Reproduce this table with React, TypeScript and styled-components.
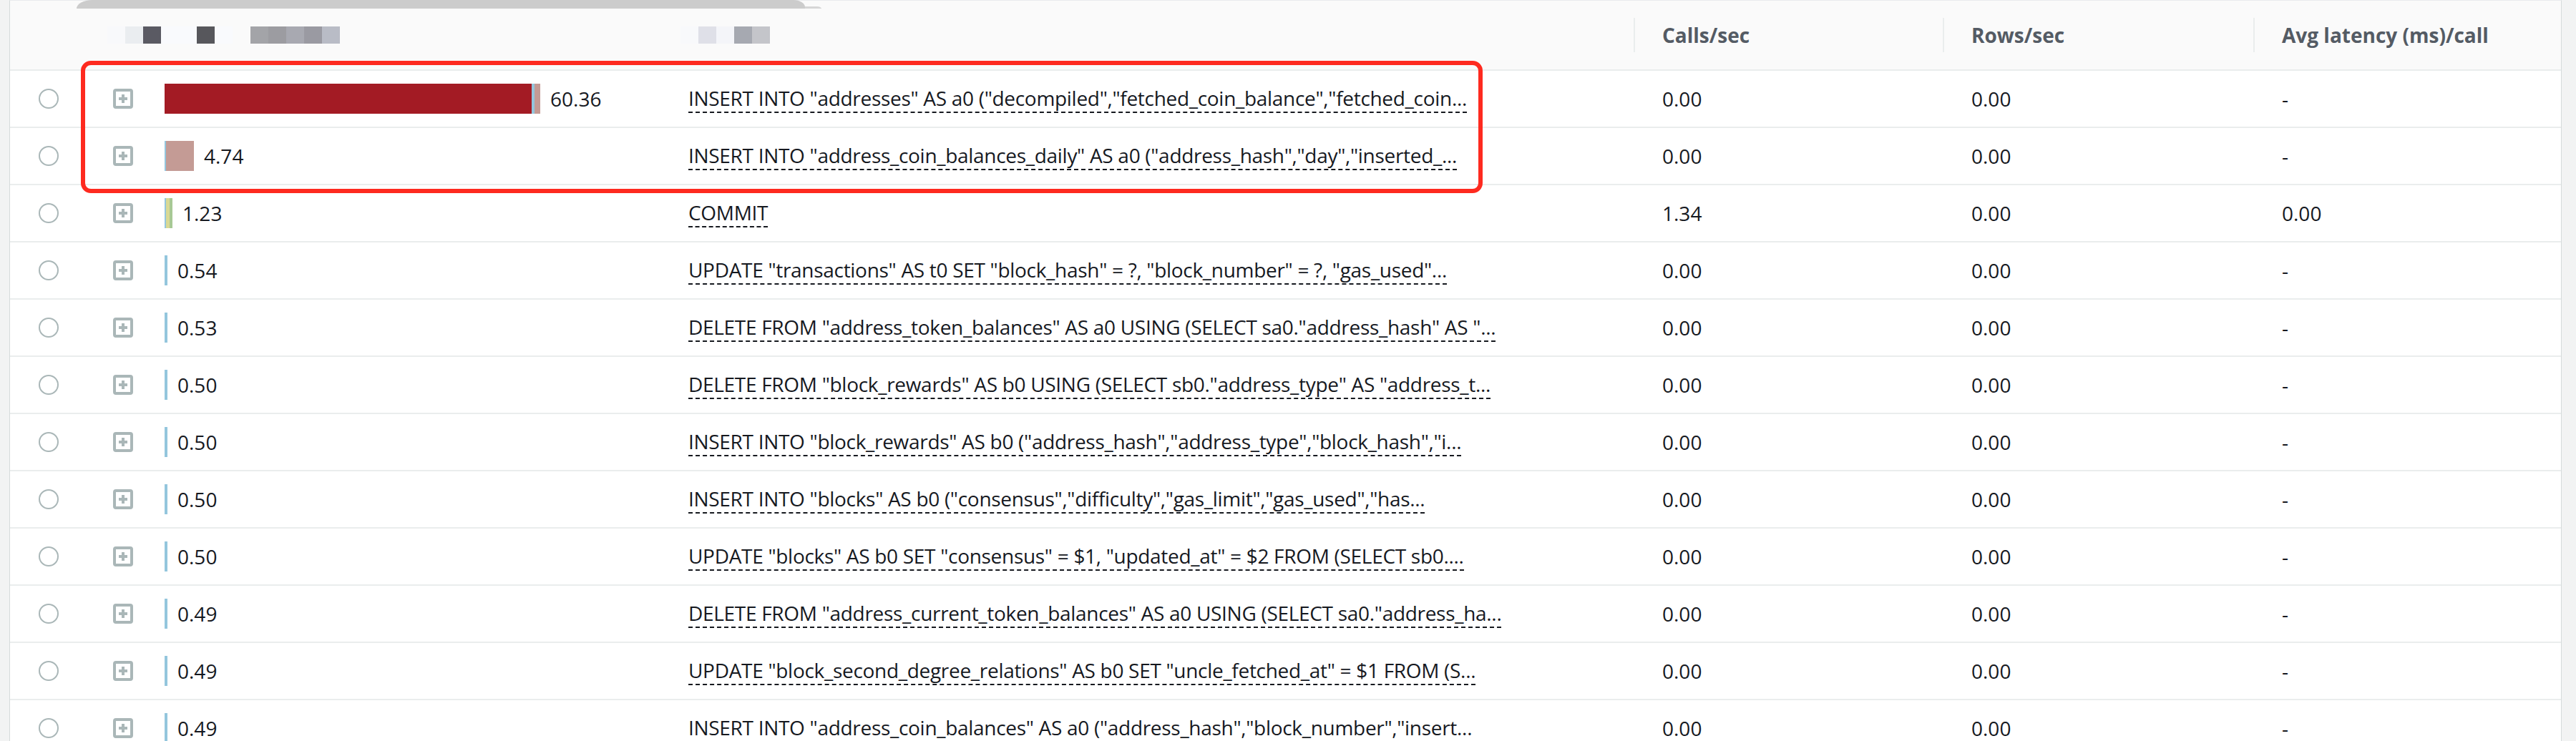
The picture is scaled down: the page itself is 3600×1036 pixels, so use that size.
import React from "react";
import styled, { createGlobalStyle } from "styled-components";

const GlobalStyle = createGlobalStyle`
  html, body {
    margin: 0;
    padding: 0;
    overflow: hidden;
    background: #f2f3f3;
  }
  body {
    font-family: "Open Sans", "Liberation Sans", Arial, sans-serif;
    color: #16191f;
  }
  * { box-sizing: border-box; }
`;

const GRID = "144px 72px 692px 1361px 432px 434px 1fr";

const Page = styled.div`
  padding: 0 20px 0 13px;
  min-height: 1036px;
`;

const TableFrame = styled.div`
  position: relative;
  background: #ffffff;
  border-left: 1px solid #d5dbdb;
  border-right: 1px solid #d5dbdb;
  border-top: 1px solid #e9ebed;
`;

const TopShade = styled.div`
  position: absolute;
  left: 93px;
  top: -1px;
  width: 1018px;
  height: 12px;
  background: #cccccc;
  border-top-left-radius: 22px 12px;
  border-top-right-radius: 16px 10px;
  &::after {
    content: "";
    position: absolute;
    right: -23px;
    bottom: 0;
    width: 23px;
    height: 3px;
    background: #d6d6d6;
    border-top-right-radius: 6px 3px;
  }
`;

const HeaderRow = styled.div`
  display: grid;
  grid-template-columns: ${GRID};
  height: 98px;
  background: #fafafa;
  border-bottom: 2px solid #eaeded;
`;

const HeaderCell = styled.div<{ $pad?: number; $span?: string; $divider?: boolean }>`
  position: relative;
  display: flex;
  align-items: center;
  grid-column: ${(p) => p.$span ?? "auto"};
  padding-left: ${(p) => p.$pad ?? 40}px;
  font-size: 28px;
  font-weight: 700;
  color: #545b64;
  white-space: nowrap;
  &::before {
    content: "";
    display: ${(p) => (p.$divider ? "block" : "none")};
    position: absolute;
    left: 0;
    top: 24px;
    width: 2px;
    height: 48px;
    background: #eaeded;
  }
`;

const Mosaic = styled.div`
  display: flex;
  height: 24px;
`;

const MosaicTile = styled.span<{ $color: string }>`
  display: block;
  width: 25px;
  height: 24px;
  background: ${(p) => p.$color};
`;

const Row = styled.div`
  display: grid;
  grid-template-columns: ${GRID};
  height: 80px;
  border-bottom: 2px solid #eaeded;
`;

const Cell = styled.div<{ $pad?: number }>`
  display: flex;
  align-items: center;
  min-width: 0;
  padding-left: ${(p) => p.$pad ?? 40}px;
  font-size: 28px;
  color: #16191f;
  white-space: nowrap;
`;

const Radio = styled.span`
  display: block;
  width: 28px;
  height: 28px;
  border-radius: 50%;
  border: 2px solid #aab7b8;
  background: #ffffff;
`;

const ExpandIcon = styled.svg`
  display: block;
  width: 28px;
  height: 28px;
`;

const BarWrap = styled.div`
  display: flex;
  align-items: center;
  gap: 14px;
`;

const Bar = styled.div`
  display: flex;
  height: 42px;
`;

const BarSegment = styled.span<{ $color: string }>`
  display: block;
  height: 42px;
  background: ${(p) => p.$color};
`;

const Sql = styled.span`
  display: inline-block;
  line-height: 38px;
  letter-spacing: -0.3px;
  border-bottom: 2px dashed #16191f;
`;

const Highlight = styled.div`
  position: absolute;
  left: 99px;
  top: 84px;
  width: 1959px;
  height: 185px;
  border: 6px solid #fe2a1f;
  border-radius: 14px;
  pointer-events: none;
`;

const BLUE = "#94c6dd";
const RED = "#a31b24";
const PINK = "#c49b95";
const YELLOW = "#d9d994";
const GREEN = "#a8c995";

type Seg = { color: string; w: number };
type RowData = {
  load: string;
  segs: Seg[];
  sql: string;
  calls: string;
  rows: string;
  avg: string;
};

const data: RowData[] = [
  {
    load: "60.36",
    segs: [
      { color: RED, w: 513 },
      { color: BLUE, w: 4 },
      { color: PINK, w: 8 },
    ],
    sql: 'INSERT INTO "addresses" AS a0 ("decompiled","fetched_coin_balance","fetched_coin...',
    calls: "0.00",
    rows: "0.00",
    avg: "-",
  },
  {
    load: "4.74",
    segs: [
      { color: BLUE, w: 2 },
      { color: PINK, w: 39 },
    ],
    sql: 'INSERT INTO "address_coin_balances_daily" AS a0 ("address_hash","day","inserted_...',
    calls: "0.00",
    rows: "0.00",
    avg: "-",
  },
  {
    load: "1.23",
    segs: [
      { color: BLUE, w: 2 },
      { color: YELLOW, w: 5 },
      { color: GREEN, w: 4 },
    ],
    sql: "COMMIT",
    calls: "1.34",
    rows: "0.00",
    avg: "0.00",
  },
  {
    load: "0.54",
    segs: [{ color: BLUE, w: 4 }],
    sql: 'UPDATE "transactions" AS t0 SET "block_hash" = ?, "block_number" = ?, "gas_used"...',
    calls: "0.00",
    rows: "0.00",
    avg: "-",
  },
  {
    load: "0.53",
    segs: [{ color: BLUE, w: 4 }],
    sql: 'DELETE FROM "address_token_balances" AS a0 USING (SELECT sa0."address_hash" AS "...',
    calls: "0.00",
    rows: "0.00",
    avg: "-",
  },
  {
    load: "0.50",
    segs: [{ color: BLUE, w: 4 }],
    sql: 'DELETE FROM "block_rewards" AS b0 USING (SELECT sb0."address_type" AS "address_t...',
    calls: "0.00",
    rows: "0.00",
    avg: "-",
  },
  {
    load: "0.50",
    segs: [{ color: BLUE, w: 4 }],
    sql: 'INSERT INTO "block_rewards" AS b0 ("address_hash","address_type","block_hash","i...',
    calls: "0.00",
    rows: "0.00",
    avg: "-",
  },
  {
    load: "0.50",
    segs: [{ color: BLUE, w: 4 }],
    sql: 'INSERT INTO "blocks" AS b0 ("consensus","difficulty","gas_limit","gas_used","has...',
    calls: "0.00",
    rows: "0.00",
    avg: "-",
  },
  {
    load: "0.50",
    segs: [{ color: BLUE, w: 4 }],
    sql: 'UPDATE "blocks" AS b0 SET "consensus" = $1, "updated_at" = $2 FROM (SELECT sb0....',
    calls: "0.00",
    rows: "0.00",
    avg: "-",
  },
  {
    load: "0.49",
    segs: [{ color: BLUE, w: 4 }],
    sql: 'DELETE FROM "address_current_token_balances" AS a0 USING (SELECT sa0."address_ha...',
    calls: "0.00",
    rows: "0.00",
    avg: "-",
  },
  {
    load: "0.49",
    segs: [{ color: BLUE, w: 4 }],
    sql: 'UPDATE "block_second_degree_relations" AS b0 SET "uncle_fetched_at" = $1 FROM (S...',
    calls: "0.00",
    rows: "0.00",
    avg: "-",
  },
  {
    load: "0.49",
    segs: [{ color: BLUE, w: 4 }],
    sql: 'INSERT INTO "address_coin_balances" AS a0 ("address_hash","block_number","insert...',
    calls: "0.00",
    rows: "0.00",
    avg: "-",
  },
];

const mosaicA = [
  "#f8f9fb",
  "#eaedf0",
  "#5a5a63",
  "#f9fafd",
  "#f9fafd",
  "#57575c",
  "#f9fafd",
  "#fafafa",
  "#a3a4a8",
  "#9c9ca1",
  "#a8a9b1",
  "#9a9aa2",
  "#b9bcc6",
];

const mosaicB = ["#f8f9fb", "#dfe0e8", "#f4f5f9", "#a6a9b1", "#c4c5ca"];

const Expand = () => (
  <ExpandIcon viewBox="0 0 28 28" aria-hidden="true">
    <rect x="2" y="2" width="24" height="24" rx="2" fill="#ffffff" stroke="#aab7b8" strokeWidth="4" />
    <rect x="12" y="8" width="4" height="12" fill="#aab7b8" />
    <rect x="8" y="12" width="12" height="4" fill="#aab7b8" />
  </ExpandIcon>
);

export default function App() {
  return (
    <>
      <GlobalStyle />
      <Page>
        <TableFrame>
          <HeaderRow>
            <HeaderCell $span="1 / 4" $pad={136}>
              <Mosaic>
                {mosaicA.map((c, i) => (
                  <MosaicTile key={i} $color={c} />
                ))}
              </Mosaic>
            </HeaderCell>
            <HeaderCell $pad={29}>
              <Mosaic>
                {mosaicB.map((c, i) => (
                  <MosaicTile key={i} $color={c} />
                ))}
              </Mosaic>
            </HeaderCell>
            <HeaderCell $divider>Calls/sec</HeaderCell>
            <HeaderCell $divider>Rows/sec</HeaderCell>
            <HeaderCell $divider>Avg latency (ms)/call</HeaderCell>
          </HeaderRow>
          {data.map((r, i) => (
            <Row key={i}>
              <Cell>
                <Radio />
              </Cell>
              <Cell $pad={0}>
                <Expand />
              </Cell>
              <Cell $pad={0}>
                <BarWrap>
                  <Bar>
                    {r.segs.map((s, j) => (
                      <BarSegment key={j} $color={s.color} style={{ width: s.w }} />
                    ))}
                  </Bar>
                  <span>{r.load}</span>
                </BarWrap>
              </Cell>
              <Cell>
                <Sql>{r.sql}</Sql>
              </Cell>
              <Cell>{r.calls}</Cell>
              <Cell>{r.rows}</Cell>
              <Cell>{r.avg}</Cell>
            </Row>
          ))}
          <TopShade />
          <Highlight />
        </TableFrame>
      </Page>
    </>
  );
}
